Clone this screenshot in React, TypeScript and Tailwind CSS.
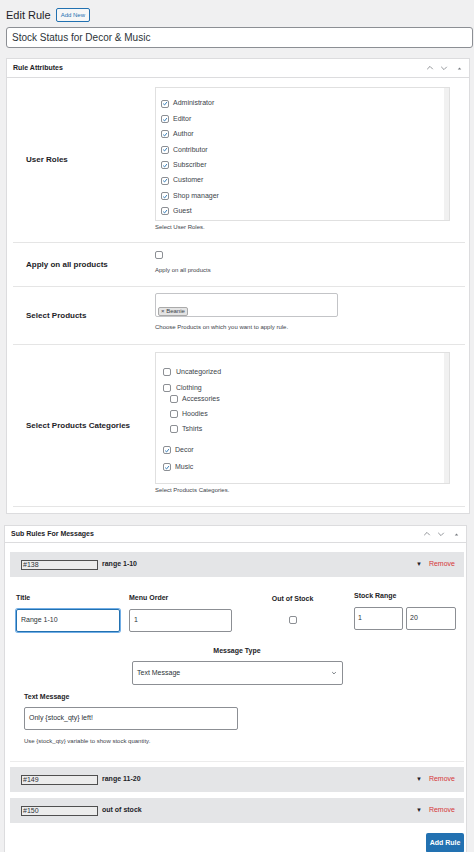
import React from "react"

const Box = ({ checked }: { checked?: boolean }) => (
    <span className="w-[8px] h-[8px] rounded-[2px] border border-[#8c8f94] bg-white flex items-center justify-center shrink-0">
        {checked && (
            <svg viewBox="0 0 10 10" className="w-[7px] h-[7px]">
                <path d="M2 5.2 L4.3 7.4 L8.2 2.6" fill="none" stroke="#2271b1" strokeWidth="1.5" />
            </svg>
        )}
    </span>
)

const PanelHead = ({ title, h }: { title: string; h: string }) => (
    <div className={`flex items-center justify-between border-b border-[#dcdcde] pl-[6px] pr-[6px] ${h}`}>
        <span className="text-[7px] font-bold text-[#1d2327]">{title}</span>
        <div className="flex items-center gap-[6px] text-[#787c82]">
            <svg viewBox="0 0 10 10" className="w-[8px] h-[8px]">
                <path d="M1.5 6.5 L5 3 L8.5 6.5" fill="none" stroke="currentColor" strokeWidth="1" />
            </svg>
            <svg viewBox="0 0 10 10" className="w-[8px] h-[8px]">
                <path d="M1.5 3.5 L5 7 L8.5 3.5" fill="none" stroke="currentColor" strokeWidth="1" />
            </svg>
            <svg viewBox="0 0 10 10" className="w-[7px] h-[7px] ml-[2px]">
                <path d="M2.5 6.5 L5 3.5 L7.5 6.5 Z" fill="currentColor" />
            </svg>
        </div>
    </div>
)

const SubBar = ({ id, name }: { id: string; name: string }) => (
    <div className="h-[25px] bg-[#e4e5e7] flex items-center pl-[11px] pr-[9px]">
        <div className="w-[77px] h-[10px] border border-[#4f4f4f] bg-[#ececec] text-[7px] leading-[8px] pl-[1px] text-[#2c3338]">{id}</div>
        <span className="ml-[4px] text-[7px] font-bold text-[#1d2327]">{name}</span>
        <span className="ml-auto text-[6px] text-[#1d2327]">▼</span>
        <span className="ml-[7px] text-[7px] text-[#d63638]">Remove</span>
    </div>
)

const roles = ["Administrator", "Editor", "Author", "Contributor", "Subscriber", "Customer", "Shop manager", "Guest"]

export default function App() {
    return (
        <div className="min-h-[852px] bg-[#f0f0f1] font-['Liberation_Sans',Arial,sans-serif] text-[#1d2327] overflow-hidden">
            {/* heading */}
            <div className="flex items-center pl-[6px] pt-[7px] h-[23px]">
                <h1 className="text-[11px] leading-none text-[#1d2327]">Edit Rule</h1>
                <span className="ml-[5px] h-[14px] px-[4px] border border-[#2271b1] rounded-[2px] bg-[#f6f7f7] text-[6px] text-[#2271b1] flex items-center">Add New</span>
            </div>
            <div className="ml-[6px] mt-[4px] w-[467px] h-[21px] border border-[#8c8f94] rounded-[3px] bg-white flex items-center pl-[5px] text-[10px] text-[#2c3338]">
                Stock Status for Decor &amp; Music
            </div>

            {/* Rule Attributes */}
            <div className="ml-[6px] mt-[10px] w-[464px] bg-white border border-[#dcdcde]">
                <PanelHead title="Rule Attributes" h="h-[19px]" />
                <div className="pl-[6px] pr-[4px] pb-[6px]">
                    {/* user roles */}
                    <div className="flex h-[165px] border-b border-[#e5e5e5]">
                        <div className="w-[142px] pl-[13px] flex items-center text-[8px] font-bold">User Roles</div>
                        <div className="pt-[9px]">
                            <div className="w-[295px] h-[134px] border border-[#e0e0e0] flex">
                                <div className="flex-1 pt-[8px] pl-[5px]">
                                    {roles.map((r) => (
                                        <div key={r} className="h-[15.4px] flex items-center gap-[4px]">
                                            <Box checked />
                                            <span className="text-[7px] text-[#3c434a]">{r}</span>
                                        </div>
                                    ))}
                                </div>
                                <div className="w-[5px] bg-[#f1f1f1]" />
                            </div>
                            <div className="mt-[2px] text-[6px] text-[#3c434a]">Select User Roles.</div>
                        </div>
                    </div>
                    {/* apply on all */}
                    <div className="flex h-[44px] border-b border-[#e5e5e5]">
                        <div className="w-[142px] pl-[13px] flex items-center text-[8px] font-bold">Apply on all products</div>
                        <div className="pt-[8px]">
                            <Box />
                            <div className="mt-[7px] text-[6px] text-[#3c434a]">Apply on all products</div>
                        </div>
                    </div>
                    {/* select products */}
                    <div className="flex h-[58px] border-b border-[#e5e5e5]">
                        <div className="w-[142px] pl-[13px] flex items-center text-[8px] font-bold">Select Products</div>
                        <div className="pt-[6px]">
                            <div className="w-[183px] h-[24px] border border-[#c3c4c7] rounded-[2px] pt-[2px] pl-[2px]">
                                <span className="inline-flex items-center h-[9px] px-[2px] bg-[#e4e4e4] border border-[#aaa] rounded-[2px] text-[6px] text-[#3c434a]">× Beanie</span>
                            </div>
                            <div className="mt-[6px] text-[6px] text-[#3c434a]">Choose Products on which you want to apply rule.</div>
                        </div>
                    </div>
                    {/* categories */}
                    <div className="flex h-[162px] border-b border-[#e5e5e5]">
                        <div className="w-[142px] pl-[13px] flex items-center text-[8px] font-bold">Select Products Categories</div>
                        <div className="pt-[7px]">
                            <div className="w-[295px] h-[132px] border border-[#e0e0e0] flex">
                                <div className="flex-1 pt-[14px] pl-[7px] text-[7px] text-[#3c434a]">
                                    <div className="h-[10px] flex items-center gap-[5px]"><Box /><span>Uncategorized</span></div>
                                    <div className="mt-[6px] h-[10px] flex items-center gap-[5px]"><Box /><span>Clothing</span></div>
                                    <div className="pl-[7px]">
                                        <div className="mt-[1px] h-[10px] flex items-center gap-[4px]"><Box /><span>Accessories</span></div>
                                        <div className="mt-[5px] h-[10px] flex items-center gap-[4px]"><Box /><span>Hoodies</span></div>
                                        <div className="mt-[5px] h-[10px] flex items-center gap-[4px]"><Box /><span>Tshirts</span></div>
                                    </div>
                                    <div className="mt-[11px] h-[10px] flex items-center gap-[4px]"><Box checked /><span>Decor</span></div>
                                    <div className="mt-[7px] h-[10px] flex items-center gap-[4px]"><Box checked /><span>Music</span></div>
                                </div>
                                <div className="w-[5px] bg-[#f1f1f1]" />
                            </div>
                            <div className="mt-[2px] text-[6px] text-[#3c434a]">Select Products Categories.</div>
                        </div>
                    </div>
                </div>
            </div>

            {/* Sub rules */}
            <div className="ml-[4px] mt-[11px] w-[463px] bg-white border border-[#dcdcde] pb-[8px]">
                <PanelHead title="Sub Rules For Messages" h="h-[17px]" />
                <div className="pl-[5px] pr-[2px] pt-[9px]">
                    <SubBar id="#138" name="range 1-10" />
                    <div className="h-[185px] border-b border-[#ececec]">
                        <div className="flex">
                            <div className="ml-[6px] w-[104px] pt-[16px]">
                                <div className="text-[7px] font-bold leading-[10px]">Title</div>
                                <div className="mt-[6px] h-[23px] border border-[#2271b1] rounded-[2px] shadow-[0_0_0_1px_#72aee6] flex items-center pl-[4px] text-[7px] text-[#2c3338]">Range 1-10</div>
                            </div>
                            <div className="ml-[9px] w-[103px] pt-[16px]">
                                <div className="text-[7px] font-bold leading-[10px]">Menu Order</div>
                                <div className="mt-[6px] h-[23px] border border-[#8c8f94] rounded-[2px] flex items-center pl-[4px] text-[7px] text-[#2c3338]">1</div>
                            </div>
                            <div className="ml-[35px] w-[51px] pt-[17px] flex flex-col items-center">
                                <div className="text-[7px] font-bold leading-[10px]">Out of Stock</div>
                                <div className="mt-[12px]"><Box /></div>
                            </div>
                            <div className="ml-[36px] pt-[14px]">
                                <div className="text-[7px] font-bold leading-[10px]">Stock Range</div>
                                <div className="mt-[6px] flex gap-[3px]">
                                    <div className="w-[49px] h-[23px] border border-[#8c8f94] rounded-[2px] flex items-center pl-[3px] text-[7px] text-[#2c3338]">1</div>
                                    <div className="w-[50px] h-[23px] border border-[#8c8f94] rounded-[2px] flex items-center pl-[3px] text-[7px] text-[#2c3338]">20</div>
                                </div>
                            </div>
                        </div>
                        <div className="mt-[14px] text-center text-[7px] font-bold leading-[10px]">Message Type</div>
                        <div className="ml-[122px] mt-[5px] w-[211px] h-[24px] border border-[#8c8f94] rounded-[2px] flex items-center justify-between pl-[4px] pr-[5px] text-[7px] text-[#2c3338]">
                            <span>Text Message</span>
                            <svg viewBox="0 0 10 10" className="w-[6px] h-[6px]">
                                <path d="M2 3.5 L5 6.5 L8 3.5" fill="none" stroke="#50575e" strokeWidth="1.3" />
                            </svg>
                        </div>
                        <div className="ml-[14px] mt-[7px] text-[7px] font-bold leading-[10px]">Text Message</div>
                        <div className="ml-[14px] mt-[5px] w-[214px] h-[23px] border border-[#8c8f94] rounded-[2px] flex items-center pl-[4px] text-[7px] text-[#2c3338]">Only {"{stock_qty}"} left!</div>
                        <div className="ml-[14px] mt-[7px] text-[6px] text-[#3c434a]">Use {"{stock_qty}"} variable to show stock quantity.</div>
                    </div>
                    <div className="mt-[5px]"><SubBar id="#149" name="range 11-20" /></div>
                    <div className="mt-[6px]"><SubBar id="#150" name="out of stock" /></div>
                    <div className="mt-[10px] flex justify-end">
                        <span className="w-[38px] h-[20px] bg-[#2271b1] rounded-[2px] text-white text-[7px] font-semibold flex items-center justify-center">Add Rule</span>
                    </div>
                </div>
            </div>
        </div>
    )
}
